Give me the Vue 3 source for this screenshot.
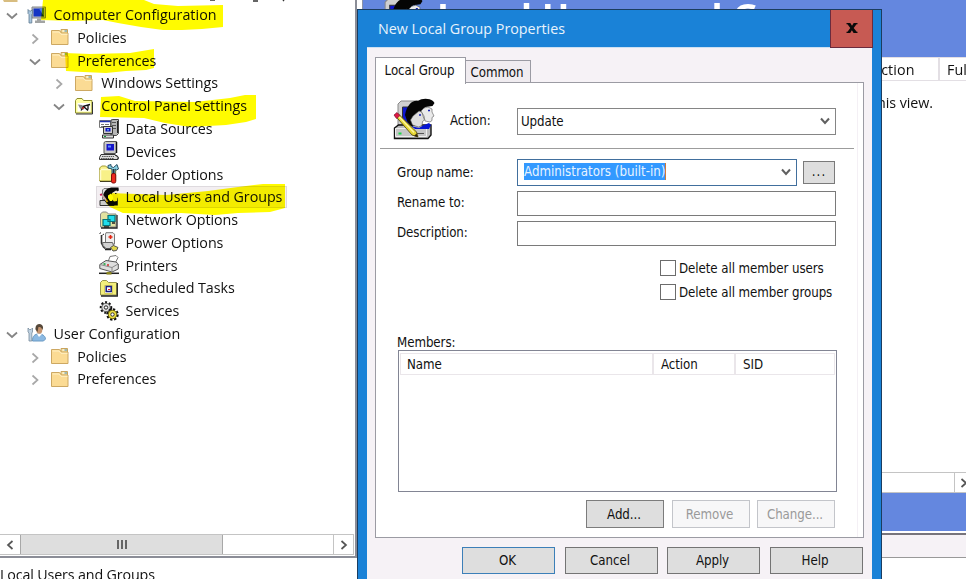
<script setup>
	import { ref } from "vue";

	const tree = ref([
		{ text: "Computer Configuration", icon: "computer", level: 0, arrow: "down" },
		{ text: "Policies", icon: "folder", level: 1, arrow: "right" },
		{ text: "Preferences", icon: "folder", level: 1, arrow: "down" },
		{ text: "Windows Settings", icon: "folder", level: 2, arrow: "right" },
		{ text: "Control Panel Settings", icon: "control", level: 2, arrow: "down" },
		{ text: "Data Sources", icon: "data", level: 3 },
		{ text: "Devices", icon: "devices", level: 3 },
		{ text: "Folder Options", icon: "folderopt", level: 3 },
		{ text: "Local Users and Groups", icon: "users", level: 3, selected: true },
		{ text: "Network Options", icon: "network", level: 3 },
		{ text: "Power Options", icon: "power", level: 3 },
		{ text: "Printers", icon: "printer", level: 3 },
		{ text: "Scheduled Tasks", icon: "tasks", level: 3 },
		{ text: "Services", icon: "services", level: 3 },
		{ text: "User Configuration", icon: "user", level: 0, arrow: "down" },
		{ text: "Policies", icon: "folder", level: 1, arrow: "right" },
		{ text: "Preferences", icon: "folder", level: 1, arrow: "right" },
	]);

	const action = ref("Update");
	const groupName = ref("Administrators (built-in)");
	const footer = ["OK", "Cancel", "Apply", "Help"];
</script>

<template>
	<div class="desktop">
		<!-- shared icon shapes -->
		<svg class="defs" width="0" height="0">
			<symbol id="i-folder" viewBox="0 0 20 20">
				<path d="M11 2.500h6.500v4H11z" fill="#f5dc94" stroke="#caa45c" />
				<path d="M12.500 4h2" stroke="#fff" />
				<path d="M14.500 4h2.500" stroke="#4d9ad0" />
				<path d="M1.500 3.500h8l2 2.500h6.500v11.500h-16.500z" fill="#fbdb94" stroke="#cda862" />
				<path d="M2.500 5h6.500l2 2.300h6.500" fill="none" stroke="#fff0c4" />
			</symbol>
			<symbol id="i-computer" viewBox="0 0 20 20">
				<path d="M5 2h13.500v11H5z" fill="#b9bcc0" stroke="#85888c" />
				<path d="M6.500 3.500h10.500v8H6.500z" fill="#1434c4" />
				<path d="M12 3.500h5v8z" fill="#4e79e8" />
				<path d="M10 13.500h4v2h4v2.500H8v-2.500h2z" fill="#a2a4a4" />
				<path d="M1 4.500l1.500 1.500h1.500L5.500 4.500v4L4.800 9.500V18H2V9.500L1 8.500z" fill="#a8c5dd" stroke="#5e7890" stroke-width=".8" />
			</symbol>
			<symbol id="i-control" viewBox="0 0 20 20">
				<path d="M1.500 17V4.500l1.500-2h5l1.500 2h8.500V17z" fill="#ffffa0" stroke="#8c8c2c" />
				<path d="M2 18h16.500V6" fill="none" stroke="#333" />
				<path d="M3.500 7h13v8.500h-13z" fill="#fff" />
				<path d="M4 8.500l4 .5 3 2.500-2 2.500-3-1.500z" fill="#888" />
				<path d="M16 8.500l-6 1.500-3 4.500M9 10l5 4.500M14 9.500v4" fill="none" stroke="#111" stroke-width="1.300" />
				<path d="M8.500 11.500l1 1" stroke="#d22" stroke-width="2" />
			</symbol>
			<symbol id="i-data" viewBox="0 0 20 20">
				<path d="M.5 1.500h11v7h-11z" fill="#fff" stroke="#777" />
				<path d="M1 2.500h10.500" stroke="#1d2fae" stroke-width="1.500" />
				<path d="M2 5.500h3m1 0h4M2 7.500h3" stroke="#777" />
				<path d="M12 1l2-.5h5.500v14l-2 2H12z" fill="#b6b6b6" stroke="#444" />
				<path d="M13 3.500h4M13 6.500h4M13 9.500h4" stroke="#555" />
				<path d="M18.500 2v12" stroke="#222" />
				<path d="M4.500 7.500h9v7h-9z" fill="#ccc" stroke="#333" />
				<path d="M6.500 9h5v3.500h-5z" fill="#1111c0" />
				<path d="M8 10h2v1.500H8z" fill="#58a5ee" />
				<path d="M3.500 16h11v3h-11z" fill="#ddd" stroke="#333" />
				<path d="M5 17.500h2" stroke="#0b9b32" />
			</symbol>
			<symbol id="i-devices" viewBox="0 0 20 20">
				<path d="M5 1.500L6.500.5h11v11l-1.500 1H5z" fill="#c9c9c9" stroke="#555" />
				<path d="M17.500 1v11" stroke="#111" stroke-width="1.500" />
				<path d="M7.500 3h7.500v6.500H7.500z" fill="#1515c9" />
				<path d="M9 4.500h3v2H9z" fill="#608eff" />
				<path d="M2 13.500h14l3 3v2H.5v-2z" fill="#ddd" stroke="#333" />
				<path d="M3 15.500h12M2 17.500h13" stroke="#555" stroke-dasharray="1.500 .7" />
				<path d="M16 14c3 1 4 2 3 4" fill="none" stroke="#222" />
			</symbol>
			<symbol id="i-folderopt" viewBox="0 0 20 20">
				<path d="M.7 17V4l2-2h4l2 2h8v13z" fill="#f8f188" stroke="#a29b34" />
				<path d="M1.500 6v10M2 5.500h10" stroke="#fffccc" stroke-width="1.500" />
				<path d="M1 17.500h12" stroke="#444022" />
				<path d="M9 1.500l3-1v2l2.500 1 3.500-3 1.500 4.500-2 1-1.500-1v5h-3V5L9 4z" fill="#8ad0e4" stroke="#294e63" />
				<path d="M14.500 5v6" stroke="#26323a" stroke-width="1.500" />
				<rect x="12.500" y="9.500" width="4.200" height="9.500" rx="1.500" fill="#ed2a1d" stroke="#84100d" />
			</symbol>
			<symbol id="i-users" viewBox="0 0 20 20">
				<path d="M3.500 3l1.500-1.500h5v11H3.500z" fill="#ddd" stroke="#777" />
				<path d="M1 13.500h14v5H1z" fill="#ccc" stroke="#333" />
				<path d="M4 9C5 3 9 .5 14 .5h5.500l.3 3-3 2 2 4v9H10l-4-4z" fill="#080808" />
				<path d="M13 6l4-2.500 1.500.5.500 4 .700 2-1.200 1-.5 3-3 .5-3-3z" fill="#efe6d0" />
				<path d="M9 8.500l3-2 1.500 2 .7 2.500-1.200 3H11l-2-3z" fill="#fff" />
				<path d="M16 6.500h1.500" stroke="#222" />
				<path d="M2 6.500l6.500 8.500" stroke="#c9a6a0" stroke-width="2" />
				<path d="M1.500 7l1 1.300" stroke="#c4114d" stroke-width="2" />
			</symbol>
			<symbol id="i-userslarge" viewBox="0 0 42 42">
				<path d="M5 6l3-3h18v24H5z" fill="#d0d0d0" stroke="#888" />
				<path d="M9.500 9H24v17H9.500z" fill="#0d16ce" stroke="#333" />
				<path d="M1.500 30l4-3H38v10l-3 3.500H1.500z" fill="#bcbcbc" stroke="#111" stroke-width="1.400" />
				<path d="M2.500 30.500h31v8h-31z" fill="#c6c6c6" stroke="#eee" />
				<path d="M5.500 35.500h3" stroke="#1bd74a" stroke-width="2" />
				<path d="M22 35.500h9" stroke="#555" />
				<path d="M12 17C14 7 19 2 25 3c4-3 11-3 15 0l1.500 2-2 3-7 1-5 5-5 10-3 5-5-5z" fill="#050505" />
				<path d="M20 18l6-5 3 1 1 4 1.500 4-2 1.500-.5 4-3.500 1.500-6-2-2-5z" fill="#dedede" stroke="#555" stroke-width=".6" />
				<path d="M28 13l3-3 4-1 4 2v3l2 4-2 1.500v3l-2 1.500-5-1-1-5z" fill="#eaeaea" stroke="#555" stroke-width=".6" />
				<path d="M26 17h2m7-4.500h2" stroke="#1721b5" stroke-width="1.500" />
				<path d="M18 28l8 2 4-2.500 6-2.500 2 2-2 4H22z" fill="#0615d2" />
				<path d="M2 17.500l3-2 18.500 18.500 1.500 5-6-2z" fill="#e9d936" stroke="#584e11" stroke-width=".9" />
				<path d="M5 17.500l16 17" stroke="#fff7a1" stroke-width="1.200" />
				<path d="M1 17l3-2.500 3 3L3.500 20.500z" fill="#e01745" stroke="#7c1832" stroke-width=".7" />
				<path d="M23.500 35.500l1.500 3.500-4-1z" fill="#31260b" />
			</symbol>
			<symbol id="i-network" viewBox="0 0 20 20">
				<path d="M1.500 17V4l2-2h4l2 2H17v13z" fill="#e2e2a0" stroke="#888" />
				<path d="M2 18h16V5" fill="none" stroke="#222" stroke-width="1.300" />
				<path d="M9 5.500h7v6H9zM4 9.500h7v6H4z" fill="#20ddec" stroke="#087378" stroke-width="1.200" />
				<path d="M5 17h5m3-4h3" stroke="#222" stroke-width="1.500" />
			</symbol>
			<symbol id="i-power" viewBox="0 0 20 20">
				<path d="M7 .7h7l1.500 1.500v10H6.500v-10z" fill="#eee" stroke="#777" />
				<path d="M11.500 3v4M9.500 5h4" stroke="#e42714" stroke-width="1.600" />
				<path d="M.5 1.500L2 .7M3.500 3L5 2" stroke="#222" />
				<path d="M2.500 3v8l2 4 2 1.500" fill="none" stroke="#333" stroke-width="1.600" />
				<path d="M3.500 10.500h10l1 3-2 3H7l-3-3z" fill="#d2d2d2" stroke="#666" />
				<path d="M6 17.500h6" stroke="#222" stroke-width="1.500" />
				<path d="M11.500 15.500l3-2 4.500 2-1.500 3-3.500.500z" fill="#dfd64c" stroke="#555" />
			</symbol>
			<symbol id="i-printer" viewBox="0 0 20 20">
				<path d="M9 7l2-5.500 6-1 2 2-3 6z" fill="#fff" stroke="#777" />
				<path d="M.8 9.500L7 5.500l10 1.500 2.300 2v5L13 17 .8 13.500z" fill="#dedede" stroke="#555" />
				<path d="M1 9.500l12 3 6-3.500M13 12.500V17" fill="none" stroke="#888" />
				<path d="M4.500 8.800l2 .5" stroke="#18a43a" stroke-width="1.600" />
				<path d="M8 10h2" stroke="#d02828" stroke-width="1.600" />
				<path d="M0 18.300h20" stroke="#222" stroke-width="1.500" />
				<path d="M7.500 18.300h5" stroke="#8c8620" stroke-width="2.500" />
			</symbol>
			<symbol id="i-tasks" viewBox="0 0 20 20">
				<path d="M1.500 17V4.500l2-2h4l2 2H17.500V17z" fill="#f3ef7c" stroke="#98954c" />
				<path d="M2 18h16.300V5" fill="none" stroke="#222" stroke-width="1.300" />
				<path d="M5.500 7.500h8v8h-8z" fill="#fff" stroke="#d5cd5b" />
				<path d="M7.200 8.500h5v5h-5z" fill="#fff" stroke="#171c82" stroke-width="1.500" />
				<path d="M9 11.500h2" stroke="#e12828" />
			</symbol>
			<symbol id="i-services" viewBox="0 0 20 20">
				<circle cx="7" cy="6.500" r="4.500" fill="#bbb" stroke="#111" stroke-width="3.500" stroke-dasharray="1.800 1.500" />
				<circle cx="7" cy="6.500" r="4.200" fill="#ddd" stroke="#666" />
				<circle cx="7" cy="6.500" r="1.700" fill="#fff" stroke="#222" />
				<circle cx="13.500" cy="13.500" r="4.500" fill="#eadb31" stroke="#111" stroke-width="3.500" stroke-dasharray="2 1.500" />
				<circle cx="13.500" cy="13.500" r="4.200" fill="#eee143" stroke="#716912" />
				<circle cx="13.500" cy="13.500" r="1.700" fill="#fff" stroke="#333" />
			</symbol>
			<symbol id="i-user" viewBox="0 0 20 20">
				<path d="M5.500 18c0-5 2-7 6.500-7s6.500 3 6.500 5l-2 2z" fill="#8bb9e2" stroke="#6a9ac4" />
				<path d="M10 11l2 3 3-3" fill="#fff" />
				<ellipse cx="12.300" cy="6.500" rx="3" ry="4.300" fill="#c69570" />
				<path d="M8.500 6.500c-1-7 8-7 7.500-1.500l-.5 2c-1-2.500-2-3-4-3l-1 5z" fill="#564839" />
				<path d="M1 5l1.500 1.500h1.500L5.500 5v4L4.800 10v8H2v-8L1 9z" fill="#c0d2e2" stroke="#778b9c" stroke-width=".8" />
			</symbol>
		</svg>

		<!-- console window behind the dialog -->
		<div class="left-pane">
			<div class="tree">
				<svg class="cut-row" width="300" height="3">
					<path d="M3 0h14l1 1-1 1H4z" fill="#d8bd80" />
					<path d="M210 0h5M253 1h5M283 1l1-1" stroke="#333" stroke-width="1.500" />
				</svg>
				<div v-for="(n, i) in tree" :key="i" class="node" :class="'lvl' + n.level">
					<span class="arrow">
						<svg v-if="n.arrow === 'down'" width="12" height="8" viewBox="0 0 12 8">
							<path d="M1 1.500l5 4.500 5-4.500" fill="none" stroke="#858585" stroke-width="1.800" />
						</svg>
						<svg v-if="n.arrow === 'right'" width="8" height="12" viewBox="0 0 8 12">
							<path d="M1.500 1.500l5 4.500-5 4.500" fill="none" stroke="#a8a8a8" stroke-width="1.700" />
						</svg>
					</span>
					<span class="label" :class="{ selected: n.selected }">
						<svg class="icon"><use :href="'#i-' + n.icon" /></svg>
						<span>{{ n.text }}</span>
					</span>
				</div>
				<!-- marker strokes -->
				<svg class="marker" width="300" height="220" viewBox="0 0 300 220">
					<path d="M43 0h101l10 4 24 2 45-1v22l-21 2-20 1h-19l-22-3-23-4-15-3-30 1-32-1z" />
					<path d="M65 53l25 1 40-1 24-4v19l-8 2-20 1-20 2-23-1-17-1z" />
					<path d="M101 97l18-1 16 5 60 1 35-4 15-3h11v24l-10 3-20 3-36 2-25-4-21-5-44-1z" />
					<path d="M108 193l58 2 42-4 30-4 25-3h22v24l-15 4-32 1-23 2-34-2-26 1-32-1-13-6-4-4v-5z" />
				</svg>
			</div>
			<div class="hscroll">
				<span class="sb-btn">
					<svg width="8" height="10"><path d="M6.500 1L2 5l4.500 4" fill="none" stroke="#555" stroke-width="1.700" /></svg>
				</span>
				<span class="thumb"><i></i><i></i><i></i></span>
				<span class="track"></span>
				<span class="sb-btn end">
					<svg width="8" height="10"><path d="M1.500 1L6 5 1.500 9" fill="none" stroke="#555" stroke-width="1.700" /></svg>
				</span>
			</div>
		</div>
		<div class="right-pane">
			<div class="banner">
				<svg class="banner-icon"><use href="#i-userslarge" /></svg>
				<span class="banner-text">Local Users and Groups</span>
			</div>
			<div class="columns">
				<span class="col-action">Action</span>
				<span class="col-full">Full Name</span>
			</div>
			<div class="empty">There are no items to show in this view.</div>
			<div class="right-scroll">
				<span>
					<svg width="8" height="10"><path d="M1.500 1L6 5 1.500 9" fill="none" stroke="#555" stroke-width="1.700" /></svg>
				</span>
			</div>
			<div class="blue-strip"></div>
			<div class="tab-strip"></div>
		</div>
		<div class="statusbar">Local Users and Groups</div>

		<!-- properties dialog -->
		<div class="dialog">
			<div class="titlebar">
				<span class="title">New Local Group Properties</span>
				<button class="close">
					<svg width="12" height="12" viewBox="0 0 12 12">
						<path d="M.5 1h3.800L6 3.800 7.700 1h3.800v1.300h-1L7.700 5.900l3 3.800h.8V11H7.600L5.900 8.200 4.200 11H.5V9.700h1l2.800-3.800-2.800-3.600h-1z" fill="#0a0a0a" />
					</svg>
				</button>
			</div>
			<div class="content">
				<div class="tabs">
					<span class="tab active">Local Group</span>
					<span class="tab">Common</span>
				</div>
				<div class="panel">
					<div class="action-row">
						<svg class="big-icon"><use href="#i-userslarge" /></svg>
						<label>Action:</label>
						<div class="combo">
							<span>{{ action }}</span>
							<svg class="drop" width="10" height="9"><path d="M1 1.500l4 4.500 4-4.500" fill="none" stroke="#606060" stroke-width="2" /></svg>
						</div>
					</div>
					<div class="sep"></div>
					<div class="field group">
						<label>Group name:</label>
						<div class="combo focus">
							<span class="sel">{{ groupName }}</span>
							<svg class="drop" width="10" height="9"><path d="M1 1.500l4 4.500 4-4.500" fill="none" stroke="#606060" stroke-width="2" /></svg>
						</div>
						<button class="browse">...</button>
					</div>
					<div class="field">
						<label>Rename to:</label>
						<div class="input"></div>
					</div>
					<div class="field">
						<label>Description:</label>
						<div class="input"></div>
					</div>
					<div class="checks">
						<div class="check"><i></i><span>Delete all member users</span></div>
						<div class="check"><i></i><span>Delete all member groups</span></div>
					</div>
					<div class="members-label">Members:</div>
					<div class="list">
						<div class="list-head">
							<span class="c-name">Name</span>
							<span class="c-action">Action</span>
							<span class="c-sid">SID</span>
						</div>
					</div>
					<div class="list-buttons">
						<button>Add...</button>
						<button class="off">Remove</button>
						<button class="off">Change...</button>
					</div>
				</div>
				<div class="footer">
					<button v-for="b in footer" :key="b" :class="{ default: b === 'OK' }">{{ b }}</button>
				</div>
			</div>
		</div>
	</div>
</template>

<style>
	body {
		margin: 0;
		overflow: hidden;
	}
</style>

<style scoped>
	.desktop {
		position: relative;
		display: grid;
		grid-template-columns: 357px 1fr;
		grid-template-rows: 558px 21px;
		width: 966px;
		height: 579px;
		overflow: hidden;
		background: #fff;
		color: #111;
		font-family: "Open Sans", "Noto Sans", sans-serif;
		font-size: 14.3px;
		letter-spacing: -0.06px;
	}
	.desktop * {
		box-sizing: border-box;
	}
	.defs {
		position: absolute;
	}
	svg {
		display: block;
		flex: none;
	}
	button {
		padding: 0;
		color: inherit;
		font: inherit;
		letter-spacing: inherit;
	}

	/* Tree */
	.left-pane {
		display: flex;
		flex-direction: column;
		border-right: 2px solid #8b8d97;
		border-bottom: 2px solid #8b8d97;
		overflow: hidden;
	}
	.tree {
		position: relative;
		height: 534px;
		padding-top: 3.3px;
	}
	.cut-row {
		position: absolute;
		top: 0;
		left: 0;
	}
	.node {
		display: flex;
		align-items: center;
		height: 22.78px;
		padding-left: 5.5px;
		white-space: nowrap;
	}
	.lvl1 {
		padding-left: 29.3px;
	}
	.lvl2 {
		padding-left: 53.3px;
	}
	.lvl3 {
		padding-left: 77.5px;
	}
	.arrow {
		display: flex;
		justify-content: center;
		width: 12px;
		margin-right: 6px;
		padding-top: 3px;
	}
	.label {
		display: flex;
		align-items: center;
		height: 22px;
		padding: 0 4px 0 2px;
		border: 1px solid transparent;
	}
	.label.selected {
		background: #f3eff2;
		border-color: #dedade;
	}
	.icon {
		width: 20px;
		height: 20px;
		margin-right: 7px;
	}
	.lvl0 .label {
		letter-spacing: 0.04px;
	}
	.marker {
		position: absolute;
		top: 0;
		left: 0;
		fill: #fffb00;
		mix-blend-mode: multiply;
	}

	.hscroll {
		display: flex;
		height: 21px;
		width: 354px;
		border: 1px solid #c4c4c4;
		border-left: 0;
		background: #fff;
	}
	.sb-btn {
		display: flex;
		align-items: center;
		justify-content: center;
		width: 20px;
	}
	.sb-btn.end {
		border-left: 1px solid #c4c4c4;
	}
	.thumb {
		display: flex;
		align-items: center;
		justify-content: center;
		gap: 2px;
		width: 203px;
		background: #dedede;
		border: 1px solid #a8a8a8;
		border-width: 0 1px;
	}
	.thumb i {
		width: 2px;
		height: 9px;
		background: #666;
	}
	.track {
		flex: 1;
	}
	.statusbar {
		grid-column: 1 / 3;
		padding-top: 7px;
		line-height: 20px;
		letter-spacing: -0.15px;
		white-space: nowrap;
	}

	/* Right pane */
	.right-pane {
		display: flex;
		flex-direction: column;
		border-bottom: 1px solid #999;
		overflow: hidden;
	}
	.banner {
		display: flex;
		height: 57px;
		margin-left: 5px;
		padding-left: 17px;
		background: #6487df;
		border-left: 1px solid #8d93a7;
		overflow: hidden;
		white-space: nowrap;
	}
	.banner-icon {
		width: 43px;
		height: 43px;
		margin-top: -4px;
	}
	.banner-text {
		margin-left: 14px;
		margin-top: -4px;
		color: #fff;
		font-size: 36px;
		line-height: 42px;
		font-weight: bold;
		letter-spacing: 0.3px;
	}
	.columns {
		display: flex;
		justify-content: flex-end;
		height: 24px;
		border-bottom: 1px solid #e3dfe4;
		border-top: 1px solid #e3dfe4;
		line-height: 23px;
		letter-spacing: 0.1px;
		white-space: nowrap;
	}
	.col-action {
		width: 68px;
		border-right: 2px solid #e3dfe4;
	}
	.col-full {
		width: 26px;
		padding-left: 7px;
		overflow: hidden;
	}
	.empty {
		height: 391px;
		padding: 11px 33px 0 0;
		line-height: 22px;
		text-align: right;
	}
	.right-scroll {
		display: flex;
		justify-content: flex-end;
		height: 21px;
		border: 1px solid #c4c4c4;
		border-width: 1px 0;
	}
	.right-scroll span {
		display: flex;
		align-items: center;
		width: 12px;
		padding-left: 5px;
		border-left: 1px solid #c4c4c4;
	}
	.blue-strip {
		height: 38px;
		background: #6487df;
	}
	.tab-strip {
		flex: 1;
		margin-top: 2px;
		border-top: 2px solid #77747c;
		background: #f6f2f6;
	}

	/* Dialog */
	.dialog {
		position: absolute;
		left: 357px;
		top: 9px;
		width: 525px;
		height: 580px;
		border: 1px solid #1b3d60;
		background: #1a82d7;
		font-family: "DejaVu Sans Condensed", "DejaVu Sans", sans-serif;
		font-stretch: condensed;
		font-size: 13.2px;
		letter-spacing: -0.07px;
	}
	.titlebar {
		display: flex;
		justify-content: space-between;
		height: 37px;
		padding: 0 8px 0 20px;
	}
	.title {
		color: #e8f3fc;
		font-family: "Open Sans", sans-serif;
		font-stretch: normal;
		font-size: 14.3px;
		line-height: 38px;
		letter-spacing: 0;
	}
	.close {
		display: flex;
		align-items: center;
		justify-content: center;
		width: 43px;
		height: 38px;
		background: #c75a53;
		border: 1px solid #6b2b3d;
		border-top: 0;
		padding-bottom: 2px;
	}
	.content {
		height: 542px;
		margin: 0 9px;
		padding: 9px 8px 0;
		background: #f6f2f6;
		border-top: 1px solid #cde0f2;
	}
	.tabs {
		display: flex;
		align-items: flex-end;
		height: 25px;
	}
	.tab {
		position: relative;
		width: 65px;
		height: 22px;
		border: 1px solid #9b9ba3;
		border-left: 0;
		border-bottom: 0;
		background: #f0ecf0;
		line-height: 23px;
		padding-right: 2px;
		text-align: center;
	}
	.tab.active {
		z-index: 1;
		width: 91px;
		height: 27px;
		margin-bottom: -2px;
		border-left: 1px solid #9b9ba3;
		background: #fff;
		line-height: 25px;
	}
	.panel {
		height: 456px;
		width: 489px;
		border: 1px solid #9b9ba3;
		background: #fff;
		box-shadow: inset -5px 0 #fff, inset -6px 0 #f4f0f5;
		padding: 0 0 0 4px;
	}
	.action-row {
		display: flex;
		align-items: center;
		height: 65px;
		padding: 11px 0 0 13px;
	}
	.big-icon {
		width: 42px;
		height: 42px;
		margin-top: -5px;
	}
	.action-row label {
		width: 67px;
		margin-left: 15px;
		padding-bottom: 1px;
	}
	.combo {
		display: flex;
		align-items: center;
		justify-content: space-between;
		width: 319px;
		height: 27px;
		padding: 0 5px 0 3px;
		border: 1px solid #858585;
		background: #fff;
	}
	.sep {
		width: 474px;
		height: 1px;
		background: #9c9c9c;
	}
	.field {
		display: flex;
		align-items: center;
		height: 30px;
		padding-left: 17px;
	}
	.field.group {
		height: 27px;
		margin-top: 10px;
		margin-bottom: 2px;
	}
	.field label {
		width: 120px;
		padding-bottom: 1px;
	}
	.field .combo {
		width: 280px;
	}
	.combo.focus {
		border-color: #416f9d;
		padding-left: 6px;
	}
	.sel {
		height: 17px;
		margin-bottom: 2px;
		background: #3399ff;
		border-right: 1px solid #d07a38;
		color: #e8f4ff;
		line-height: 17px;
		letter-spacing: 0;
	}
	.browse {
		width: 32px;
		height: 23px;
		margin-left: 6px;
		margin-bottom: 1px;
		border: 1px solid #7a7a7a;
		background: #dedede;
		letter-spacing: 1px;
		line-height: 20px;
	}
	.input {
		width: 319px;
		height: 25px;
		border: 1px solid #7a7a7a;
	}
	.checks {
		padding: 8px 0 0 280px;
	}
	.check {
		display: flex;
		align-items: center;
		height: 24px;
		gap: 3px;
		white-space: nowrap;
	}
	.check i {
		width: 16px;
		height: 16px;
		border: 1px solid #6c6c6c;
	}
	.members-label {
		height: 16px;
		margin-top: 30px;
		padding-left: 17px;
		line-height: 18px;
	}
	.list {
		width: 439px;
		height: 142px;
		margin-left: 18px;
		padding: 2px 1px;
		border: 1px solid #828594;
	}
	.list-head {
		display: flex;
		height: 22px;
		border: 1px solid #eae6ea;
		line-height: 21px;
	}
	.c-name {
		width: 253px;
		padding-left: 6px;
		border-right: 2px solid #eae6ea;
	}
	.c-action {
		width: 82px;
		padding-left: 7px;
		border-right: 2px solid #eae6ea;
	}
	.c-sid {
		padding-left: 7px;
	}
	.list-buttons {
		display: flex;
		justify-content: flex-end;
		gap: 7.5px;
		padding: 8px 28px 0 0;
	}
	.list-buttons button {
		width: 78px;
		height: 28px;
		padding-right: 2px;
		border: 1px solid #7c7c7c;
		background: #dedede;
	}
	.list-buttons .off {
		border-color: #c3c5ca;
		background: #f7f7f8;
		color: #9a9a9a;
	}
	.footer {
		display: flex;
		gap: 9.5px;
		padding: 9px 0 0 87px;
	}
	.footer button {
		width: 93px;
		height: 27px;
		padding-right: 2px;
		border: 1px solid #747474;
		background: #dedede;
	}
	.footer .default {
		border-color: #3c7fb8;
	}
</style>
